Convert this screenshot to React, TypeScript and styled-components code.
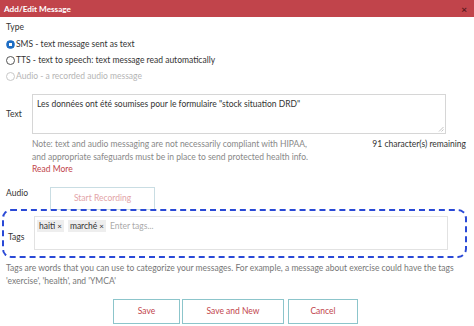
import React from "react";
import styled, { createGlobalStyle } from "styled-components";

const GlobalStyle = createGlobalStyle`
  html, body {
    margin: 0;
    padding: 0;
    background: #fff;
  }
  body {
    font-family: Lato, "Open Sans", Arial, sans-serif;
    font-size: 8.5px;
    color: #333;
  }
`;

const red = "#c1444b";
const teal = "#8cc5cb";

const Modal = styled.div`
  width: 474px;
  height: 326px;
  overflow: hidden;
  background: #fff;
`;

const Header = styled.div`
  display: flex;
  align-items: center;
  justify-content: space-between;
  height: 17px;
  padding: 0 7px 0 4px;
  background: ${red};
`;

const Title = styled.div`
  color: #fff;
  font-weight: 700;
  font-size: 8.2px;
`;

const Close = styled.div`
  color: #5a1a1e;
  font-size: 10px;
  font-weight: 700;
  line-height: 1;
`;

const Body = styled.div`
  padding: 4px 6px 0 6px;
  display: flex;
  flex-direction: column;
`;

const SectionLabel = styled.div`
  height: 12px;
  line-height: 12px;
  margin-bottom: 5px;
`;

const RadioList = styled.div`
  display: flex;
  flex-direction: column;
  gap: 4px;
  margin-bottom: 12px;
`;

const RadioRow = styled.div<{ $disabled?: boolean }>`
  display: flex;
  align-items: center;
  height: 12px;
  color: ${(p) => (p.$disabled ? "#b5b5b5" : "#333")};
`;

const RadioDot = styled.span<{ $checked?: boolean; $disabled?: boolean }>`
  box-sizing: border-box;
  width: 9px;
  height: 9px;
  border-radius: 50%;
  margin-right: 1px;
  border: 1px solid ${(p) => (p.$checked ? "#1e6dc4" : p.$disabled ? "#c8c8c8" : "#555")};
  background: ${(p) => (p.$checked ? "radial-gradient(circle, #fff 0 1.5px, #1e6dc4 2px)" : "#fff")};
`;

const FieldRow = styled.div`
  display: flex;
  align-items: center;
`;

const FieldLabel = styled.div`
  width: 26px;
  flex: none;
`;

const TextArea = styled.div`
  position: relative;
  box-sizing: border-box;
  width: 414px;
  height: 40px;
  border: 1px solid #d6d6d6;
  padding: 4px 4px;
  color: #333;
`;

const Grip = styled.svg`
  position: absolute;
  right: 1px;
  bottom: 1px;
`;

const NoteRow = styled.div`
  display: flex;
  justify-content: space-between;
  padding-left: 26px;
  margin-top: 4px;
`;

const Note = styled.div`
  color: #888;
  line-height: 12.5px;
`;

const ReadMore = styled.div`
  color: ${red};
`;

const Remaining = styled.div`
  color: #333;
  line-height: 12.5px;
  margin-right: 2px;
`;

const AudioRow = styled.div`
  display: flex;
  align-items: flex-start;
  margin-top: 11px;
`;

const AudioLabel = styled(FieldLabel)`
  padding-top: 1px;
`;

const GhostButton = styled.div`
  box-sizing: border-box;
  width: 105px;
  height: 23px;
  margin-left: 18px;
  display: flex;
  align-items: center;
  justify-content: center;
  border: 1px solid #c9dde3;
  color: #e3a4a8;
`;

const TagsHighlight = styled.div`
  box-sizing: border-box;
  margin: -1px 1px 0 -4px;
  height: 49px;
  border: 2px dashed #2a49d6;
  border-radius: 9px;
  display: flex;
  align-items: center;
  padding-left: 4px;
`;

const TagsLabel = styled.div`
  width: 26px;
  flex: none;
  margin-top: 8px;
`;

const TagsInput = styled.div`
  box-sizing: border-box;
  width: 414px;
  height: 34px;
  border: 1px solid #e2e2e2;
  padding: 3px 2px;
  display: flex;
  align-items: flex-start;
  gap: 4px;
`;

const Chip = styled.span`
  display: inline-flex;
  align-items: center;
  gap: 2px;
  height: 12px;
  padding: 0 2px;
  background: #eeeeee;
  color: #333;
`;

const ChipX = styled.span`
  font-size: 8px;
`;

const Placeholder = styled.span`
  height: 12px;
  line-height: 12px;
  color: #aaa;
`;

const Help = styled.div`
  margin-top: 4px;
  color: #777;
`;

const HelpLine = styled.div`
  line-height: 13px;
  white-space: nowrap;
`;

const Actions = styled.div`
  display: flex;
  justify-content: center;
  gap: 2px;
  margin-top: 11px;
  padding-right: 3px;
`;

const Button = styled.div<{ $w: number; $gap?: number }>`
  box-sizing: border-box;
  width: ${(p) => p.$w}px;
  height: 25px;
  margin-left: ${(p) => p.$gap ?? 0}px;
  display: flex;
  align-items: center;
  justify-content: center;
  border: 1px solid ${teal};
  color: ${red};
`;

export default function App() {
  return (
    <Modal>
      <GlobalStyle />
      <Header>
        <Title>Add/Edit Message</Title>
        <Close>×</Close>
      </Header>
      <Body>
        <SectionLabel>Type</SectionLabel>
        <RadioList>
          <RadioRow>
            <RadioDot $checked />
            SMS - text message sent as text
          </RadioRow>
          <RadioRow>
            <RadioDot />
            TTS - text to speech: text message read automatically
          </RadioRow>
          <RadioRow $disabled>
            <RadioDot $disabled />
            Audio - a recorded audio message
          </RadioRow>
        </RadioList>

        <FieldRow>
          <FieldLabel>Text</FieldLabel>
          <TextArea>
            Les données ont été soumises pour le formulaire "stock situation DRD"
            <Grip width="6" height="6" viewBox="0 0 6 6">
              <path d="M1 5.5L5.5 1M3.5 5.5L5.5 3.5" stroke="#aaa" strokeWidth="0.7" />
            </Grip>
          </TextArea>
        </FieldRow>

        <NoteRow>
          <Note>
            Note: text and audio messaging are not necessarily compliant with HIPAA,
            <br />
            and appropriate safeguards must be in place to send protected health info.
            <ReadMore>Read More</ReadMore>
          </Note>
          <Remaining>91 character(s) remaining</Remaining>
        </NoteRow>

        <AudioRow>
          <AudioLabel>Audio</AudioLabel>
          <GhostButton>Start Recording</GhostButton>
        </AudioRow>

        <TagsHighlight>
          <TagsLabel>Tags</TagsLabel>
          <TagsInput>
            <Chip>
              haiti <ChipX>×</ChipX>
            </Chip>
            <Chip>
              marché <ChipX>×</ChipX>
            </Chip>
            <Placeholder>Enter tags...</Placeholder>
          </TagsInput>
        </TagsHighlight>

        <Help>
          <HelpLine>
            Tags are words that you can use to categorize your messages. For example, a message about exercise could have the tags
          </HelpLine>
          <HelpLine>'exercise', 'health', and 'YMCA'</HelpLine>
        </Help>

        <Actions>
          <Button $w={67}>Save</Button>
          <Button $w={102}>Save and New</Button>
          <Button $w={70} $gap={2}>Cancel</Button>
        </Actions>
      </Body>
    </Modal>
  );
}
